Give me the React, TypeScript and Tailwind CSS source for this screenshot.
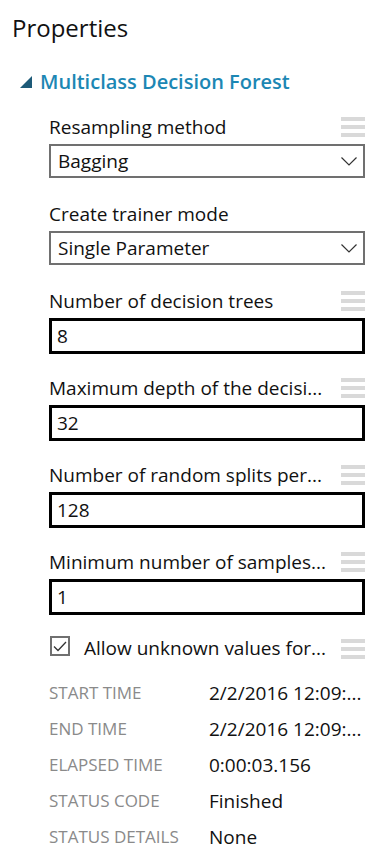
import React from 'react';

const font = { fontFamily: '"Open Sans", "Noto Sans", sans-serif' };

function Grip() {
  return (
    <div className="flex w-[24px] shrink-0 flex-col gap-[4px]">
      <span className="h-[4px] bg-[#d9d9d9]" />
      <span className="h-[4px] bg-[#d9d9d9]" />
      <span className="h-[4px] bg-[#d9d9d9]" />
    </div>
  );
}

function Chevron() {
  return (
    <svg width="16" height="9" viewBox="0 0 16 9" className="shrink-0">
      <path d="M0.5 0.5 L8 8 L15.5 0.5" fill="none" stroke="#333" strokeWidth="1.2" />
    </svg>
  );
}

function LabelRow({ label, grip = true }: { label: string; grip?: boolean }) {
  return (
    <div className="flex h-[20px] items-center justify-between gap-2">
      <span className="whitespace-nowrap text-[19px] leading-[20px] text-[#111]">{label}</span>
      {grip && <Grip />}
    </div>
  );
}

function SelectField({ label, value, grip }: { label: string; value: string; grip?: boolean }) {
  return (
    <div className="mb-[26px] flex flex-col gap-[7px]">
      <LabelRow label={label} grip={grip} />
      <div className="flex h-[34px] items-center justify-between border-2 border-[#707070] pl-[7px] pr-[6px]">
        <span className="text-[19px] leading-[24px] text-[#111]">{value}</span>
        <Chevron />
      </div>
    </div>
  );
}

function NumberField({ label, value }: { label: string; value: string }) {
  return (
    <div className="mb-[24px] flex flex-col gap-[7px]">
      <LabelRow label={label} />
      <div className="flex h-[36px] items-center border-[3px] border-black pl-[5px]">
        <span className="text-[19px] leading-[24px] text-[#111]">{value}</span>
      </div>
    </div>
  );
}

const stats: [string, string][] = [
  ['START TIME', '2/2/2016 12:09:...'],
  ['END TIME', '2/2/2016 12:09:...'],
  ['ELAPSED TIME', '0:00:03.156'],
  ['STATUS CODE', 'Finished'],
  ['STATUS DETAILS', 'None'],
];

export default function App() {
  return (
    <div className="h-[859px] w-[391px] overflow-hidden bg-white" style={font}>
      <div className="pl-[12px] pt-[13px] text-[24px] leading-[30px] text-[#111]">Properties</div>

      <div className="mt-[28px] flex h-[22px] items-center gap-[8px] pl-[20px]">
        <svg width="12" height="12" viewBox="0 0 12 12">
          <path d="M12 0 L12 12 L0 12 Z" fill="#1d5a78" />
        </svg>
        <span className="text-[20px] font-semibold leading-[22px] text-[#1c87b4]">Multiclass Decision Forest</span>
      </div>

      <div className="mt-[24px] pl-[49px] pr-[26px]">
        <SelectField label="Resampling method" value="Bagging" />
        <SelectField label="Create trainer mode" value="Single Parameter" grip={false} />
        <NumberField label="Number of decision trees" value="8" />
        <NumberField label="Maximum depth of the decisi..." value="32" />
        <NumberField label="Number of random splits per..." value="128" />
        <NumberField label="Minimum number of samples..." value="1" />

        <div className="flex h-[20px] items-center justify-between">
          <div className="flex items-center gap-[14px] pl-[1px]">
            <span className="-mt-[6px] flex h-[20px] w-[20px] items-center justify-center border-2 border-[#707070]">
              <svg width="14" height="11" viewBox="0 0 14 11">
                <path d="M1 5.5 L5 9.5 L13 1" fill="none" stroke="#333" strokeWidth="1.3" />
              </svg>
            </span>
            <span className="-mt-[3px] whitespace-nowrap text-[19px] leading-[20px] text-[#111]">Allow unknown values for...</span>
          </div>
          <Grip />
        </div>

        <div className="mt-[16px] flex flex-col">
          {stats.map(([k, v]) => (
            <div key={k} className="flex h-[36px] items-center">
              <span className="w-[160px] text-[17px] text-[#8a8a8a]">{k}</span>
              <span className="text-[19px] text-[#111]">{v}</span>
            </div>
          ))}
        </div>
      </div>
    </div>
  );
}
